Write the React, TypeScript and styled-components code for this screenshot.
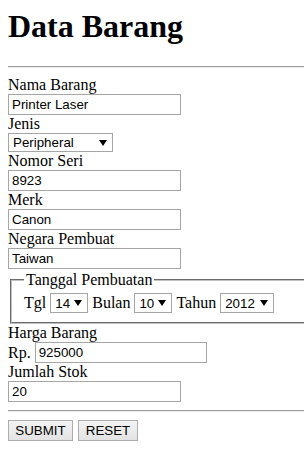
import React from "react";
import styled, { createGlobalStyle } from "styled-components";

const GlobalStyle = createGlobalStyle`
  html { overflow: hidden; }
  body {
    margin: 8px 0 8px 8px;
    font-family: "Liberation Serif", "Times New Roman", serif;
    font-size: 16px;
    color: #000;
    background: #fff;
  }
  #root { overflow: hidden; }
`;

const Page = styled.div`
  width: 420px;
  min-width: 420px;
  display: flex;
  flex-direction: column;
  align-items: stretch;
`;

const Title = styled.h1`
  margin: 0 0 13px;
  font-size: 32px;
  line-height: 37px;
  font-weight: bold;
`;

const Rule = styled.hr`
  align-self: stretch;
  margin: 8px 0;
  height: 0;
  border: 0;
  border-top: 1px solid #9a9a9a;
  border-bottom: 1px solid #eeeeee;
`;

const Form = styled.form`
  display: flex;
  flex-direction: column;
  align-items: stretch;
`;

const FieldLabel = styled.div`
  line-height: 18px;
  height: 18px;
`;

const Line = styled.div`
  display: flex;
  align-items: center;
  gap: 4px;
  line-height: 18px;
`;

const TextInput = styled.input<{ $w?: number }>`
  box-sizing: border-box;
  width: ${(p) => p.$w ?? 173}px;
  height: 21px;
  margin: 0;
  padding: 1px 3px;
  border: 1px solid #a6a6a6;
  font-family: "Liberation Sans", Arial, sans-serif;
  font-size: 13.33px;
  color: #000;
  background: #fff;
  outline: none;
`;

const SelectWrap = styled.span<{ $w: number; $h: number }>`
  position: relative;
  display: inline-flex;
  width: ${(p) => p.$w}px;
  height: ${(p) => p.$h}px;
`;

const NativeSelect = styled.select`
  appearance: none;
  -webkit-appearance: none;
  box-sizing: border-box;
  width: 100%;
  height: 100%;
  margin: 0;
  padding: 0 0 0 4px;
  border: 1px solid #a6a6a6;
  border-radius: 0;
  background: #fff;
  font-family: "Liberation Sans", Arial, sans-serif;
  font-size: 13.33px;
  color: #000;
  outline: none;
`;

const Arrow = styled.svg`
  position: absolute;
  right: 6px;
  top: 50%;
  margin-top: -3px;
  width: 8px;
  height: 6px;
  pointer-events: none;
`;

const DateGroup = styled.fieldset`
  align-self: stretch;
  margin: 2px 2px 0;
  padding: 4px 12px 9px;
  border: 2px groove #c0c0c0;
  display: flex;
  align-items: center;
  gap: 4px;
`;

const Legend = styled.legend`
  padding: 0 2px;
  line-height: 18px;
`;

const Buttons = styled.div`
  display: flex;
  gap: 5px;
`;

const Button = styled.button<{ $w: number }>`
  box-sizing: border-box;
  width: ${(p) => p.$w}px;
  height: 21px;
  margin: 0;
  padding: 1px 6px;
  border: 1px solid #adadad;
  border-radius: 0;
  background: linear-gradient(#f3f3f3, #e3e3e3);
  font-family: "Liberation Sans", Arial, sans-serif;
  font-size: 13.33px;
  color: #000;
`;

function Select({ w, h, value, options }: { w: number; h: number; value: string; options: string[] }) {
  return (
    <SelectWrap $w={w} $h={h}>
      <NativeSelect defaultValue={value}>
        {options.map((o) => (
          <option key={o} value={o}>
            {o}
          </option>
        ))}
      </NativeSelect>
      <Arrow viewBox="0 0 8 6">
        <path d="M0 0 H8 L4 6 Z" fill="#000" />
      </Arrow>
    </SelectWrap>
  );
}

const range = (a: number, b: number) => Array.from({ length: b - a + 1 }, (_, i) => String(a + i));

export default function App() {
  return (
    <>
      <GlobalStyle />
      <Page>
        <Title>Data Barang</Title>
        <Rule />
        <Form onSubmit={(e) => e.preventDefault()}>
          <FieldLabel>Nama Barang</FieldLabel>
          <Line>
            <TextInput defaultValue="Printer Laser" />
          </Line>
          <FieldLabel>Jenis</FieldLabel>
          <Line>
            <Select w={105} h={19} value="Peripheral" options={["Peripheral", "Hardware", "Software"]} />
          </Line>
          <FieldLabel>Nomor Seri</FieldLabel>
          <Line>
            <TextInput defaultValue="8923" />
          </Line>
          <FieldLabel>Merk</FieldLabel>
          <Line>
            <TextInput defaultValue="Canon" />
          </Line>
          <FieldLabel>Negara Pembuat</FieldLabel>
          <Line>
            <TextInput defaultValue="Taiwan" />
          </Line>
          <DateGroup>
            <Legend>Tanggal Pembuatan</Legend>
            <span>Tgl</span>
            <Select w={38} h={20} value="14" options={range(1, 31)} />
            <span>Bulan</span>
            <Select w={38} h={20} value="10" options={range(1, 12)} />
            <span>Tahun</span>
            <Select w={54} h={20} value="2012" options={range(2000, 2020)} />
          </DateGroup>
          <FieldLabel>Harga Barang</FieldLabel>
          <Line>
            <span>Rp.</span>
            <TextInput $w={172} defaultValue="925000" />
          </Line>
          <FieldLabel>Jumlah Stok</FieldLabel>
          <Line>
            <TextInput defaultValue="20" />
          </Line>
          <Rule />
          <Buttons>
            <Button type="submit" $w={65}>SUBMIT</Button>
            <Button type="reset" $w={60}>RESET</Button>
          </Buttons>
        </Form>
      </Page>
    </>
  );
}
